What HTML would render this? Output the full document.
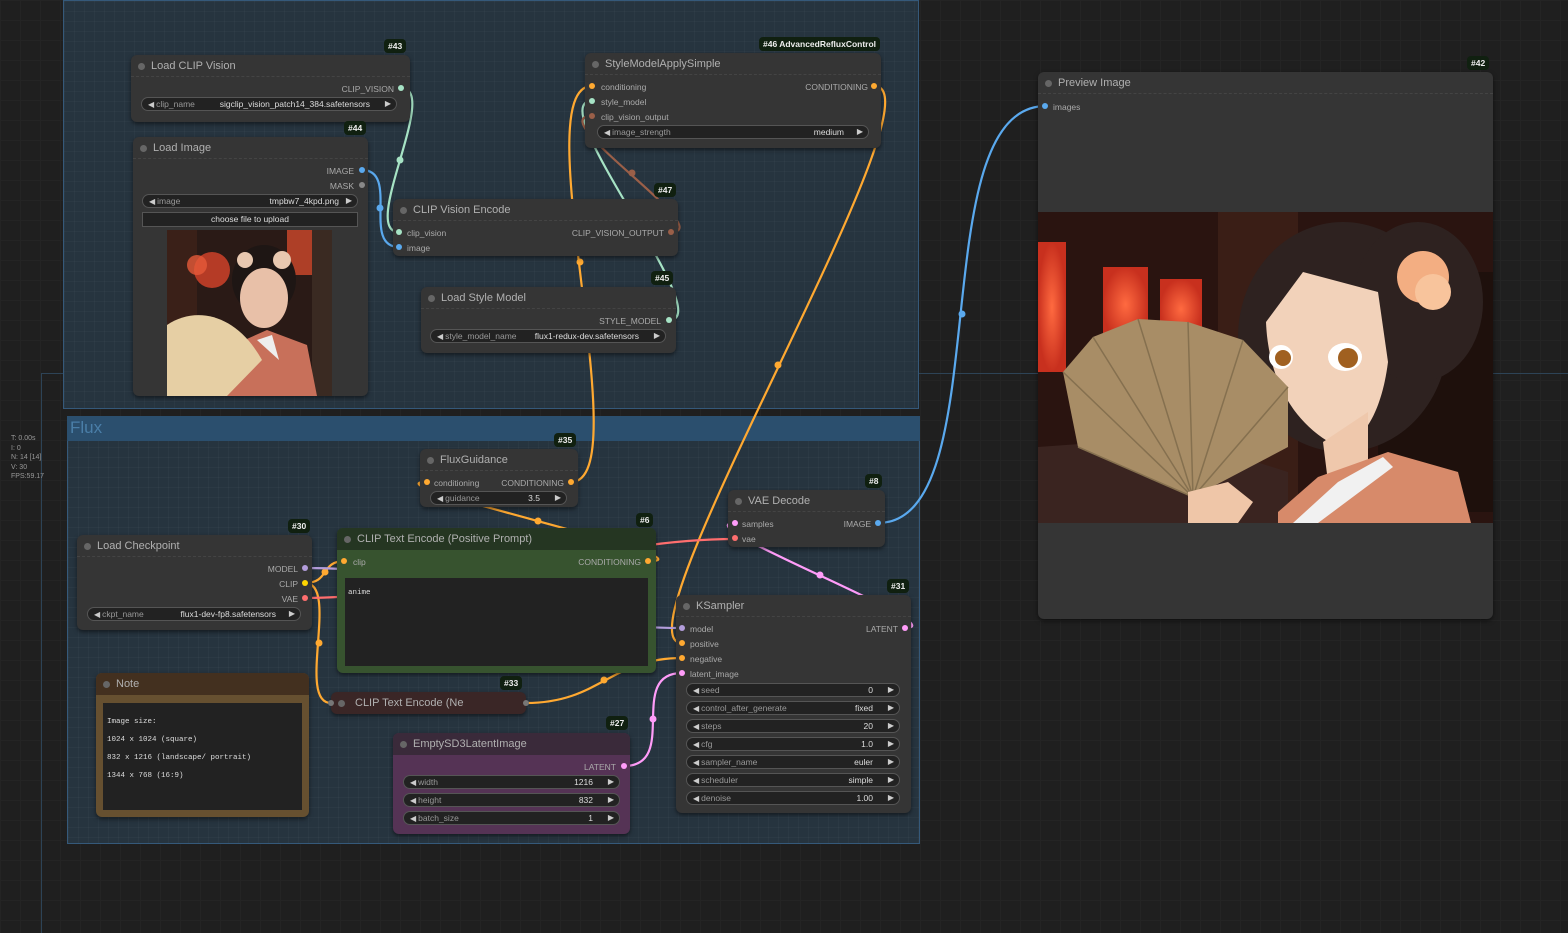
<!DOCTYPE html>
<html><head><meta charset="utf-8"><style>
*{margin:0;padding:0;box-sizing:border-box}
body{width:1568px;height:933px;overflow:hidden;background:#1f1f1f;font-family:"Liberation Sans",sans-serif;position:relative;
background-image:linear-gradient(#242424 1px,transparent 1px),linear-gradient(90deg,#242424 1px,transparent 1px);background-size:20px 20px;}
.a{position:absolute}
.grp{position:absolute;background:#26343f;border:1px solid #35597a;
background-image:linear-gradient(rgba(255,255,255,.025) 1px,transparent 1px),linear-gradient(90deg,rgba(255,255,255,.025) 1px,transparent 1px);background-size:10px 10px}
.n{position:absolute;background:#353535;border-radius:6px;box-shadow:0 2px 4px rgba(0,0,0,.5)}
.n .t{height:22px;line-height:22px;font-size:11px;color:#b0b0b0;padding-left:20px;position:relative;border-bottom:1px dashed #444;border-radius:6px 6px 0 0}
.n .t:before{content:"";position:absolute;left:7px;top:8px;width:7px;height:7px;border-radius:50%;background:#666}
.b{position:absolute;background:#102010;color:#eee;font-size:8.5px;font-weight:bold;height:14px;line-height:14px;padding:0 4px;border-radius:4px}
.l{position:absolute;font-size:8.5px;color:#aaa;white-space:nowrap;line-height:10px}
.r{text-align:right}
.d{position:absolute;width:6px;height:6px;border-radius:50%}
.w{position:absolute;height:14px;border:1px solid #555;border-radius:7px;background:#222;font-size:8.5px;color:#999;line-height:12px;padding:0 6px}
.w .v{position:absolute;right:18px;top:0;color:#ddd}
.w:before{content:"◀";color:#ccc;margin-right:2px;font-size:8px}
.w:after{content:"▶";position:absolute;right:5px;top:0;color:#ccc;font-size:8px}
.mono{font-family:"Liberation Mono",monospace;font-size:7.5px;color:#ddd}
</style></head><body>

<div class="a" style="left:41px;top:373px;width:1px;height:560px;background:#2d4356"></div>
<div class="a" style="left:41px;top:373px;width:23px;height:1px;background:#2d4356"></div>
<div class="a" style="left:918px;top:373px;width:650px;height:1px;background:#2d4356"></div>

<div class="grp" style="left:63px;top:0;width:856px;height:409px"></div>
<div class="grp" style="left:67px;top:416px;width:853px;height:428px"></div>
<div class="a" style="left:67px;top:416px;width:853px;height:25px;background:#2b4f6e"></div>
<div class="a" style="left:70px;top:418px;font-size:17px;color:#4a7ea8">Flux</div>

<div class="a" style="left:11px;top:434px;font-size:7px;color:#999;line-height:9.5px">T: 0.00s<br>I: 0<br>N: 14 [14]<br>V: 30<br>FPS:59.17</div>

<svg class="a" style="left:0;top:0" width="1568" height="933" fill="none" stroke-width="2.2">
<path d="M401,88 C441,88 359,232 399,232" stroke="#a6e3c5"/>
<circle cx="400" cy="160" r="3.5" fill="#a6e3c5"/>
<path d="M362,170 C400,170 361,247 399,247" stroke="#5aa9ee"/>
<circle cx="380" cy="208" r="3.5" fill="#5aa9ee"/>
<path d="M669,320 C720,320 540,101 592,101" stroke="#a6e3c5"/>
<path d="M671,232 C720,232 540,116 592,116" stroke="#9a5f48"/>
<circle cx="632" cy="173" r="3.5" fill="#9a5f48"/>
<path d="M571,482 C640,482 523,86 592,86" stroke="#ffa931"/>
<circle cx="580" cy="262" r="3.5" fill="#ffa931"/>
<path d="M874,86 C950,86 610,643 682,643" stroke="#ffa931"/>
<circle cx="778" cy="365" r="3.5" fill="#ffa931"/>
<path d="M649,561 C720,561 360,482 427,482" stroke="#ffa931"/>
<circle cx="538" cy="521" r="3.5" fill="#ffa931"/>
<path d="M526,703 C600,703 610,658 682,658" stroke="#ffa931"/>
<circle cx="604" cy="680" r="3.5" fill="#ffa931"/>
<path d="M305,583 C330,583 320,561 345,561" stroke="#ffa931"/>
<circle cx="325" cy="572" r="3.5" fill="#ffa931"/>
<path d="M305,583 C340,583 296,703 331,703" stroke="#ffa931"/>
<circle cx="319" cy="643" r="3.5" fill="#ffa931"/>
<path d="M305,598 C450,598 590,539 735,539" stroke="#ff6e6e"/>
<path d="M305,568 C480,568 510,628 682,628" stroke="#b39ddb"/>
<path d="M624,766 C680,766 626,673 682,673" stroke="#ff9cf9"/>
<circle cx="653" cy="719" r="3.5" fill="#ff9cf9"/>
<path d="M878,523 C1000,523 920,106 1046,106" stroke="#5aa9ee"/>
<circle cx="962" cy="314" r="3.5" fill="#5aa9ee"/>
<path d="M905,628 C960,628 680,523 735,523" stroke="#ff9cf9"/>
<circle cx="820" cy="575" r="3.5" fill="#ff9cf9"/>
</svg>

<div class="b" style="left:384px;top:39px">#43</div>
<div class="n" style="left:131px;top:55px;width:279px;height:67px"><div class="t">Load CLIP Vision</div></div>
<div class="l r" style="left:300px;top:84px;width:94px">CLIP_VISION</div>
<div class="d" style="left:398px;top:85px;background:#a6e3c5"></div>
<div class="w" style="left:141px;top:97px;width:256px">clip_name<span class="v" style="right:26px">sigclip_vision_patch14_384.safetensors</span></div>

<div class="b" style="left:344px;top:121px">#44</div>
<div class="n" style="left:133px;top:137px;width:235px;height:259px"><div class="t">Load Image</div></div>
<div class="l r" style="left:280px;top:166px;width:74px">IMAGE</div>
<div class="d" style="left:359px;top:167px;background:#5aa9ee"></div>
<div class="l r" style="left:280px;top:181px;width:74px">MASK</div>
<div class="d" style="left:359px;top:182px;background:#888"></div>
<div class="w" style="left:142px;top:194px;width:216px">image<span class="v">tmpbw7_4kpd.png</span></div>
<div class="a" style="left:142px;top:212px;width:216px;height:15px;background:#222;border:1px solid #555;font-size:8.5px;color:#ddd;text-align:center;line-height:13px">choose file to upload</div>
<svg class="a" style="left:167px;top:230px" width="165" height="166">
<rect width="165" height="166" fill="#2a1a16"/>
<rect x="0" y="0" width="30" height="166" fill="#3a2018"/>
<circle cx="45" cy="40" r="18" fill="#d8442a" opacity=".8"/>
<circle cx="30" cy="35" r="10" fill="#e65a3a" opacity=".8"/>
<rect x="120" y="0" width="35" height="45" fill="#d0482c" opacity=".8"/>
<rect x="145" y="0" width="20" height="166" fill="#3a2a22"/>
<ellipse cx="97" cy="50" rx="32" ry="35" fill="#1e1614"/>
<ellipse cx="97" cy="68" rx="24" ry="30" fill="#e8c0a8"/>
<path d="M55,120 L100,100 L140,115 L150,166 L50,166Z" fill="#c8705a"/>
<path d="M90,110 L105,105 L112,130Z" fill="#eee"/>
<path d="M0,95 C30,75 70,85 95,130 L60,166 L0,166Z" fill="#e6cfa4"/>
<circle cx="78" cy="30" r="8" fill="#e8c8b0"/>
<circle cx="115" cy="30" r="9" fill="#e8c8b0"/>
</svg>

<div class="b" style="left:654px;top:183px">#47</div>
<div class="n" style="left:393px;top:199px;width:285px;height:57px"><div class="t">CLIP Vision Encode</div></div>
<div class="d" style="left:396px;top:229px;background:#a6e3c5"></div>
<div class="l" style="left:407px;top:228px">clip_vision</div>
<div class="d" style="left:396px;top:244px;background:#5aa9ee"></div>
<div class="l" style="left:407px;top:243px">image</div>
<div class="l r" style="left:520px;top:228px;width:144px">CLIP_VISION_OUTPUT</div>
<div class="d" style="left:668px;top:229px;background:#9a5f48"></div>

<div class="b" style="left:759px;top:37px">#46 AdvancedRefluxControl</div>
<div class="n" style="left:585px;top:53px;width:296px;height:95px"><div class="t">StyleModelApplySimple</div></div>
<div class="d" style="left:589px;top:83px;background:#ffa931"></div><div class="l" style="left:601px;top:82px">conditioning</div>
<div class="d" style="left:589px;top:98px;background:#a6e3c5"></div><div class="l" style="left:601px;top:97px">style_model</div>
<div class="d" style="left:589px;top:113px;background:#9a5f48"></div><div class="l" style="left:601px;top:112px">clip_vision_output</div>
<div class="l r" style="left:760px;top:82px;width:108px">CONDITIONING</div>
<div class="d" style="left:871px;top:83px;background:#ffa931"></div>
<div class="w" style="left:597px;top:125px;width:272px">image_strength<span class="v" style="right:24px">medium</span></div>

<div class="b" style="left:651px;top:271px">#45</div>
<div class="n" style="left:421px;top:287px;width:255px;height:66px"><div class="t">Load Style Model</div></div>
<div class="l r" style="left:560px;top:316px;width:101px">STYLE_MODEL</div>
<div class="d" style="left:666px;top:317px;background:#a6e3c5"></div>
<div class="w" style="left:430px;top:329px;width:236px">style_model_name<span class="v" style="right:26px">flux1-redux-dev.safetensors</span></div>

<div class="b" style="left:554px;top:433px">#35</div>
<div class="n" style="left:420px;top:449px;width:158px;height:58px"><div class="t">FluxGuidance</div></div>
<div class="d" style="left:424px;top:479px;background:#ffa931"></div><div class="l" style="left:434px;top:478px">conditioning</div>
<div class="l r" style="left:480px;top:478px;width:84px">CONDITIONING</div>
<div class="d" style="left:568px;top:479px;background:#ffa931"></div>
<div class="w" style="left:430px;top:491px;width:137px">guidance<span class="v" style="right:26px">3.5</span></div>

<div class="b" style="left:636px;top:513px">#6</div>
<div class="n" style="left:337px;top:528px;width:319px;height:145px;background:#37532f"><div class="t" style="background:#253622;border-bottom:none">CLIP Text Encode (Positive Prompt)</div></div>
<div class="d" style="left:341px;top:558px;background:#ffa931"></div><div class="l" style="left:353px;top:557px">clip</div>
<div class="l r" style="left:540px;top:557px;width:101px">CONDITIONING</div>
<div class="d" style="left:645px;top:558px;background:#ffa931"></div>
<div class="a mono" style="left:345px;top:578px;width:303px;height:88px;background:#222;padding:11px 3px">anime</div>

<div class="b" style="left:288px;top:519px">#30</div>
<div class="n" style="left:77px;top:535px;width:235px;height:95px"><div class="t">Load Checkpoint</div></div>
<div class="l r" style="left:200px;top:564px;width:98px">MODEL</div><div class="d" style="left:302px;top:565px;background:#b39ddb"></div>
<div class="l r" style="left:200px;top:579px;width:98px">CLIP</div><div class="d" style="left:302px;top:580px;background:#ffd500"></div>
<div class="l r" style="left:200px;top:594px;width:98px">VAE</div><div class="d" style="left:302px;top:595px;background:#ff6e6e"></div>
<div class="w" style="left:87px;top:607px;width:214px">ckpt_name<span class="v" style="right:24px">flux1-dev-fp8.safetensors</span></div>

<div class="n" style="left:96px;top:673px;width:213px;height:144px;background:#665030"><div class="t" style="background:#43301f;border-bottom:none">Note</div></div>
<div class="a mono" style="left:103px;top:703px;width:199px;height:107px;background:#222;padding:10px 4px;line-height:18px">Image size:<br>1024 x 1024 (square)<br>832 x 1216 (landscape/ portrait)<br>1344 x 768 (16:9)</div>

<div class="b" style="left:500px;top:676px">#33</div>
<div class="n" style="left:331px;top:692px;width:195px;height:22px;background:#3a2626"><div class="t" style="border-bottom:none;padding-left:24px">CLIP Text Encode (Ne</div></div>
<div class="d" style="left:328px;top:700px;background:#777"></div>
<div class="d" style="left:523px;top:700px;background:#777"></div>

<div class="b" style="left:606px;top:716px">#27</div>
<div class="n" style="left:393px;top:733px;width:237px;height:101px;background:#553355"><div class="t" style="background:#3a2a3a;border-bottom:none">EmptySD3LatentImage</div></div>
<div class="l r" style="left:530px;top:762px;width:86px">LATENT</div><div class="d" style="left:621px;top:763px;background:#ff9cf9"></div>
<div class="w" style="left:403px;top:775px;width:217px">width<span class="v" style="right:26px">1216</span></div>
<div class="w" style="left:403px;top:793px;width:217px">height<span class="v" style="right:26px">832</span></div>
<div class="w" style="left:403px;top:811px;width:217px">batch_size<span class="v" style="right:26px">1</span></div>

<div class="b" style="left:865px;top:474px">#8</div>
<div class="n" style="left:728px;top:490px;width:157px;height:57px"><div class="t">VAE Decode</div></div>
<div class="d" style="left:732px;top:520px;background:#ff9cf9"></div><div class="l" style="left:742px;top:519px">samples</div>
<div class="d" style="left:732px;top:535px;background:#ff6e6e"></div><div class="l" style="left:742px;top:534px">vae</div>
<div class="l r" style="left:800px;top:519px;width:71px">IMAGE</div><div class="d" style="left:875px;top:520px;background:#5aa9ee"></div>

<div class="b" style="left:887px;top:579px">#31</div>
<div class="n" style="left:676px;top:595px;width:235px;height:218px"><div class="t">KSampler</div></div>
<div class="d" style="left:679px;top:625px;background:#b39ddb"></div><div class="l" style="left:690px;top:624px">model</div>
<div class="d" style="left:679px;top:640px;background:#ffa931"></div><div class="l" style="left:690px;top:639px">positive</div>
<div class="d" style="left:679px;top:655px;background:#ffa931"></div><div class="l" style="left:690px;top:654px">negative</div>
<div class="d" style="left:679px;top:670px;background:#ff9cf9"></div><div class="l" style="left:690px;top:669px">latent_image</div>
<div class="l r" style="left:820px;top:624px;width:78px">LATENT</div><div class="d" style="left:902px;top:625px;background:#ff9cf9"></div>
<div class="w" style="left:686px;top:683px;width:214px">seed<span class="v" style="right:26px">0</span></div>
<div class="w" style="left:686px;top:701px;width:214px">control_after_generate<span class="v" style="right:26px">fixed</span></div>
<div class="w" style="left:686px;top:719px;width:214px">steps<span class="v" style="right:26px">20</span></div>
<div class="w" style="left:686px;top:737px;width:214px">cfg<span class="v" style="right:26px">1.0</span></div>
<div class="w" style="left:686px;top:755px;width:214px">sampler_name<span class="v" style="right:26px">euler</span></div>
<div class="w" style="left:686px;top:773px;width:214px">scheduler<span class="v" style="right:26px">simple</span></div>
<div class="w" style="left:686px;top:791px;width:214px">denoise<span class="v" style="right:26px">1.00</span></div>

<div class="b" style="left:1467px;top:56px">#42</div>
<div class="n" style="left:1038px;top:72px;width:455px;height:547px"><div class="t">Preview Image</div></div>
<div class="d" style="left:1042px;top:103px;background:#5aa9ee"></div><div class="l" style="left:1053px;top:102px">images</div>
<svg class="a" style="left:1038px;top:212px" width="455" height="311">
<defs><radialGradient id="g1"><stop offset="0" stop-color="#ff6a40"/><stop offset="1" stop-color="#c8301e"/></radialGradient></defs>
<rect width="455" height="311" fill="#2a1410"/>
<rect x="180" y="0" width="80" height="311" fill="#3a1e16"/>
<rect x="340" y="60" width="115" height="240" fill="#1e100c"/>
<rect x="0" y="30" width="28" height="130" fill="url(#g1)"/>
<rect x="65" y="55" width="45" height="75" fill="url(#g1)"/>
<rect x="122" y="67" width="42" height="60" fill="url(#g1)"/>
<path d="M0,235 L140,225 L250,260 L250,311 L0,311Z" fill="#3a2420"/>
<ellipse cx="305" cy="125" rx="105" ry="115" fill="#2e2220"/>
<ellipse cx="380" cy="90" rx="65" ry="80" fill="#2e2220"/>
<path d="M228,110 C230,160 250,210 300,235 C330,230 345,190 350,150 L340,80 L265,60Z" fill="#f2d2ba"/>
<path d="M330,200 L330,260 L290,270 L285,230Z" fill="#efc8ac"/>
<path d="M240,300 L280,265 L350,240 L420,260 L433,311 L240,311Z" fill="#d78a6a"/>
<path d="M255,311 L300,270 L345,245 L355,255 L280,311Z" fill="#f1f1f1"/>
<circle cx="385" cy="65" r="26" fill="#f3ae82"/>
<circle cx="395" cy="80" r="18" fill="#f8c49c"/>
<ellipse cx="243" cy="145" rx="12" ry="12" fill="#fff"/><circle cx="245" cy="146" r="8" fill="#a06020"/>
<ellipse cx="307" cy="145" rx="17" ry="14" fill="#fff"/><circle cx="310" cy="146" r="10" fill="#a06020"/>
<path d="M25,160 L55,125 L100,107 L150,110 L205,128 L250,175 L250,235 L155,285 L40,235Z" fill="#a88d66"/>
<path d="M155,285 L25,160 M155,285 L55,125 M155,285 L100,107 M155,285 L150,110 M155,285 L205,128 M155,285 L250,175 M155,285 L40,235" stroke="#85704f" stroke-width="1.5"/>
<path d="M150,280 L190,270 L215,290 L200,311 L150,311Z" fill="#efc6a8"/>
</svg>

</body></html>
